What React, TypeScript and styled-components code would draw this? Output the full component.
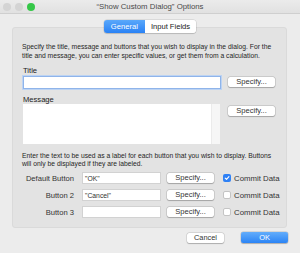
import styled, { createGlobalStyle } from 'styled-components';

const GlobalStyle = createGlobalStyle`
  html, body {
    margin: 0;
    padding: 0;
    background: #ececec;
  }
  body {
    font-family: 'Liberation Sans', Arial, sans-serif;
    color: #222;
  }
`;

const rows = [
  { label: 'Default Button', value: '"OK"', checked: true },
  { label: 'Button 2', value: '"Cancel"', checked: false },
  { label: 'Button 3', value: '', checked: false },
];

export default function App() {
  return (
    <>
      <GlobalStyle />
      <Window>
        <TitleBar>
          <Lights>
            <Light color="#d4d4d4" />
            <Light color="#d4d4d4" />
            <Light color="#35c748" />
          </Lights>
          <WindowTitle>“Show Custom Dialog” Options</WindowTitle>
          <span />
        </TitleBar>

        <Body>
          <Tabs>
            <Tab active>General</Tab>
            <Tab>Input Fields</Tab>
          </Tabs>

          <Box>
            <Note>
              Specify the title, message and buttons that you wish to display in the dialog. For the
              title and message, you can enter specific values, or get them from a calculation.
            </Note>

            <FieldLabel>Title</FieldLabel>
            <FieldRow>
              <TitleInput />
              <SpecifyButton>Specify...</SpecifyButton>
            </FieldRow>

            <FieldLabel>Message</FieldLabel>
            <FieldRow>
              <MessageArea>
                <ScrollTrack />
              </MessageArea>
              <SpecifyButton>Specify...</SpecifyButton>
            </FieldRow>

            <Note second>
              Enter the text to be used as a label for each button that you wish to display. Buttons
              will only be displayed if they are labeled.
            </Note>

            <ButtonList>
              {rows.map((r) => (
                <ButtonRow key={r.label}>
                  <RowLabel>{r.label}</RowLabel>
                  <RowInput>{r.value}</RowInput>
                  <SpecifyButton>Specify...</SpecifyButton>
                  <Commit>
                    <Check checked={r.checked}>
                      {r.checked && (
                        <svg width="6" height="6" viewBox="0 0 10 10">
                          <path d="M2 5.2 L4.2 7.4 L8.2 2.6" fill="none" stroke="#fff" strokeWidth="1.8" strokeLinecap="round" strokeLinejoin="round" />
                        </svg>
                      )}
                    </Check>
                    Commit Data
                  </Commit>
                </ButtonRow>
              ))}
            </ButtonList>
          </Box>

          <Footer>
            <PushButton>Cancel</PushButton>
            <PushButton primary>OK</PushButton>
          </Footer>
        </Body>
      </Window>
    </>
  );
}

const Window = styled.div`
  width: 300px;
  height: 253px;
  display: flex;
  flex-direction: column;
  background: #ececec;
  overflow: hidden;
`;

const TitleBar = styled.div`
  height: 13px;
  display: grid;
  grid-template-columns: 1fr auto 1fr;
  align-items: center;
  background: linear-gradient(#ebebeb, #e1e1e1);
  border-bottom: 1px solid #cfcfcf;
`;

const Lights = styled.div`
  display: flex;
  gap: 4px;
  padding-left: 3px;
`;

const Light = styled.span<{ color: string }>`
  width: 8px;
  height: 8px;
  border-radius: 50%;
  background: ${(p) => p.color};
`;

const WindowTitle = styled.div`
  font-size: 7.8px;
  color: #4a4a4a;
  white-space: nowrap;
`;

const Body = styled.div`
  display: flex;
  flex-direction: column;
  padding: 0 12px 0 12px;
`;

const Tabs = styled.div`
  align-self: center;
  display: flex;
  margin-top: 6px;
  margin-bottom: -6px;
  position: relative;
  z-index: 1;
  border-radius: 3px;
  box-shadow: 0 0 0 0.5px rgba(0, 0, 0, 0.15), 0 1px 1px rgba(0, 0, 0, 0.12);
  overflow: hidden;
`;

const Tab = styled.div<{ active?: boolean }>`
  height: 13px;
  line-height: 13px;
  font-size: 7.6px;
  padding: 0 ${(p) => (p.active ? '7px' : '6px')};
  background: ${(p) => (p.active ? 'linear-gradient(#5aa8fb, #2a82f5)' : '#fff')};
  color: ${(p) => (p.active ? '#fff' : '#222')};
`;

const Box = styled.div`
  height: 201px;
  box-sizing: border-box;
  margin-right: 1px;
  padding: 14px 11px 0 9px;
  background: #e3e3e3;
  border: 1px solid #dadada;
  border-radius: 3px;
  display: flex;
  flex-direction: column;
`;

const Note = styled.p<{ second?: boolean }>`
  margin: ${(p) => (p.second ? '8px 0 0 0' : '0')};
  font-size: 6.75px;
  line-height: ${(p) => (p.second ? '8px' : '9px')};
  color: #262626;
`;

const FieldLabel = styled.div`
  margin: 6px 0 0 1px;
  font-size: 7.6px;
  line-height: 9px;
  color: #222;
`;

const FieldRow = styled.div`
  display: flex;
  align-items: flex-start;
  justify-content: space-between;
  margin-left: 1px;
`;

const TitleInput = styled.div`
  width: 196px;
  height: 11px;
  background: #fff;
  border: 1px solid #8fb4ea;
  box-shadow: 0 0 0 1px #bcd3f3;
  margin-top: 1px;
`;

const MessageArea = styled.div`
  width: 197px;
  height: 40px;
  background: #fff;
  display: flex;
  justify-content: flex-end;
`;

const ScrollTrack = styled.div`
  width: 8px;
  background: #f6f6f6;
  border-left: 1px solid #ebebeb;
`;

const SpecifyButton = styled.div`
  width: 47px;
  height: 10px;
  margin-top: 2px;
  box-sizing: border-box;
  background: #fff;
  border-radius: 2px;
  box-shadow: 0 0 0 0.5px rgba(0, 0, 0, 0.18), 0 0.5px 1px rgba(0, 0, 0, 0.2);
  font-size: 7.6px;
  line-height: 10px;
  text-align: center;
  color: #333;
`;

const ButtonList = styled.div`
  display: flex;
  flex-direction: column;
  gap: 5px;
  margin-top: 4px;
`;

const ButtonRow = styled.div`
  display: flex;
  align-items: center;
  height: 12px;

  & > ${SpecifyButton} {
    margin: 0 0 0 6px;
    flex-shrink: 0;
  }
`;

const RowLabel = styled.div`
  width: 52px;
  flex-shrink: 0;
  font-size: 7.6px;
  text-align: right;
  color: #333;
  white-space: nowrap;
`;

const RowInput = styled.div`
  margin-left: 8px;
  width: 79px;
  flex-shrink: 0;
  height: 12px;
  box-sizing: border-box;
  background: #fff;
  border: 0.5px solid #d2d2d2;
  font-size: 6.8px;
  line-height: 11px;
  padding-left: 2px;
  color: #333;
`;

const Commit = styled.div`
  display: flex;
  align-items: center;
  gap: 3px;
  margin-left: 9px;
  font-size: 7.8px;
  color: #333;
  white-space: nowrap;
`;

const Check = styled.span<{ checked: boolean }>`
  width: 8px;
  height: 8px;
  box-sizing: border-box;
  border-radius: 2px;
  display: flex;
  align-items: center;
  justify-content: center;
  background: ${(p) => (p.checked ? '#2f81f5' : '#fff')};
  border: ${(p) => (p.checked ? 'none' : '0.5px solid #c4c4c4')};
`;

const Footer = styled.div`
  display: flex;
  justify-content: flex-end;
  align-items: center;
  gap: 17px;
  margin-top: 4px;
`;

const PushButton = styled.div<{ primary?: boolean }>`
  width: ${(p) => (p.primary ? '47px' : '37px')};
  height: ${(p) => (p.primary ? '11px' : '10px')};
  border-radius: 2px;
  font-size: 7.4px;
  line-height: ${(p) => (p.primary ? '11px' : '10px')};
  text-align: center;
  background: ${(p) => (p.primary ? 'linear-gradient(#63adfb, #2b84f5)' : '#fff')};
  color: ${(p) => (p.primary ? '#fff' : '#333')};
  box-shadow: 0 0 0 0.5px rgba(0, 0, 0, 0.15), 0 0.5px 1px rgba(0, 0, 0, 0.2);
`;
